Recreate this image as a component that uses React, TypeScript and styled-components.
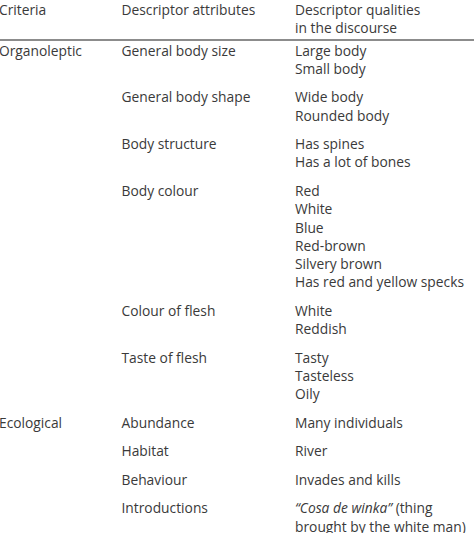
import React from "react";
import styled, { createGlobalStyle } from "styled-components";

const Global = createGlobalStyle`
  html, body {
    margin: 0;
    padding: 0;
    background: #ffffff;
    overflow: hidden;
  }
  body {
    font-family: "Open Sans", "Noto Sans", sans-serif;
  }
`;

const Table = styled.div`
  width: 478px;
  margin-left: -1px;
  color: #3a3a3a;
  font-size: 13.8px;
  line-height: 18.3px;
  white-space: nowrap;
`;

const Grid = styled.div`
  display: grid;
  grid-template-columns: 122.5px 173.5px 1fr;
`;

const Header = styled(Grid)`
  padding-top: 0.5px;
  padding-bottom: 1.5px;
  border-bottom: 2px solid #8c8c8c;
`;

const Body = styled.div`
  padding-top: 1px;
`;

const Row = styled(Grid)`
  padding-bottom: 10.2px;
`;

const Cell = styled.div`
  display: flex;
  flex-direction: column;
`;

const Em = styled.span`
  font-style: italic;
`;

type RowData = { criteria?: string; attr: string; qualities: React.ReactNode[] };

const rows: RowData[] = [
  { criteria: "Organoleptic", attr: "General body size", qualities: ["Large body", "Small body"] },
  { attr: "General body shape", qualities: ["Wide body", "Rounded body"] },
  { attr: "Body structure", qualities: ["Has spines", "Has a lot of bones"] },
  {
    attr: "Body colour",
    qualities: ["Red", "White", "Blue", "Red-brown", "Silvery brown", "Has red and yellow specks"],
  },
  { attr: "Colour of flesh", qualities: ["White", "Reddish"] },
  { attr: "Taste of flesh", qualities: ["Tasty", "Tasteless", "Oily"] },
  { criteria: "Ecological", attr: "Abundance", qualities: ["Many individuals"] },
  { attr: "Habitat", qualities: ["River"] },
  { attr: "Behaviour", qualities: ["Invades and kills"] },
  {
    attr: "Introductions",
    qualities: [
      <span key="a">
        <Em>“Cosa de winka”</Em> (thing
      </span>,
      "brought by the white man)",
    ],
  },
];

export default function App() {
  return (
    <>
      <Global />
      <Table>
        <Header>
          <Cell>Criteria</Cell>
          <Cell>Descriptor attributes</Cell>
          <Cell>
            <span>Descriptor qualities</span>
            <span>in the discourse</span>
          </Cell>
        </Header>
        <Body>
          {rows.map((r, i) => (
            <Row key={i}>
              <Cell>{r.criteria ?? ""}</Cell>
              <Cell>{r.attr}</Cell>
              <Cell>
                {r.qualities.map((q, j) => (
                  <span key={j}>{q}</span>
                ))}
              </Cell>
            </Row>
          ))}
        </Body>
      </Table>
    </>
  );
}
